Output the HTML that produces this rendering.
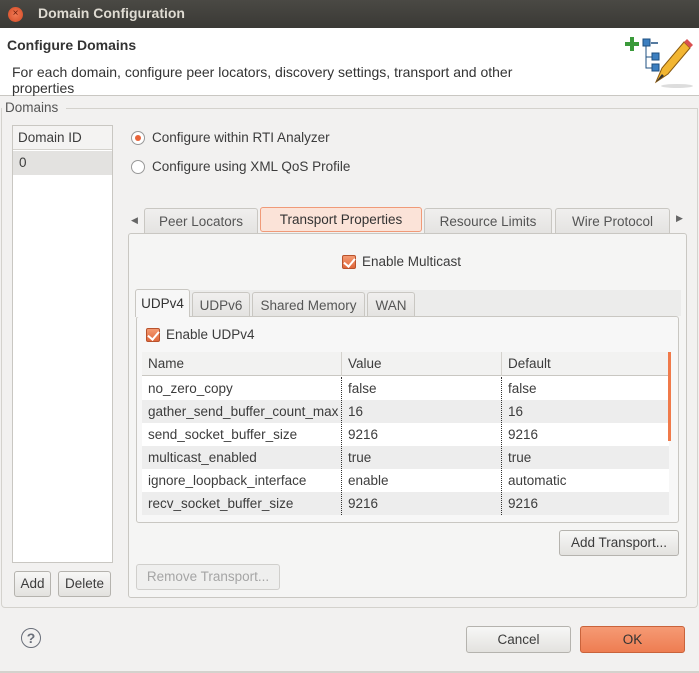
<!DOCTYPE html>
<html><head><meta charset="utf-8"><style>
*{box-sizing:border-box;margin:0;padding:0}
body{width:699px;height:673px;overflow:hidden;background:#f2f1f0;font-family:"Liberation Sans",sans-serif;font-size:13.5px;color:#3c3c3c;position:relative}
.a{position:absolute}
.btn{position:absolute;border:1px solid #b5b3ae;border-radius:3px;background:linear-gradient(#f7f7f6,#e3e2df);text-align:center;line-height:24px;color:#3c3c3c}
.tab{position:absolute;border:1px solid #c9c7c2;border-bottom:none;border-radius:3px 3px 0 0;background:linear-gradient(#f0efee,#e4e3e1);text-align:center;color:#555}
.cb{position:absolute;width:14px;height:14px;border-radius:2px;background:linear-gradient(#f49a72,#e0683c);border:1px solid #b8522c}
.cb:after{content:"";position:absolute;left:3px;top:0px;width:5px;height:9px;border:solid #fff;border-width:0 2px 2px 0;transform:rotate(40deg)}
.row{position:absolute;left:142px;width:527px;height:23px;line-height:23px}
.row span{position:absolute;top:0}
</style></head><body>
<div class="a" style="left:0;top:0;width:699px;height:28px;background:linear-gradient(#4a4944,#3a3935)"></div>
<div class="a" style="left:8px;top:7px;width:15px;height:15px;border-radius:50%;background:radial-gradient(#f27a55,#d24a25);color:#6a1c0a;font-size:10px;text-align:center;line-height:14px">×</div>
<div class="a" style="left:38px;top:5px;color:#dfdbd2;font-weight:bold;font-size:14px">Domain Configuration</div>
<div class="a" style="left:0;top:28px;width:699px;height:68px;background:#fff;border-bottom:1px solid #c9c7c2"></div>
<div class="a" style="left:7px;top:37px;font-weight:bold;font-size:14px;color:#333">Configure Domains</div>
<div class="a" style="left:12px;top:64px;font-size:14px;color:#333;line-height:16px;width:560px">For each domain, configure peer locators, discovery settings, transport and other properties</div>
<svg class="a" style="left:622px;top:30px" width="76" height="64">
<rect x="8" y="7" width="4" height="14" fill="#3a9a3a"/><rect x="3" y="12" width="14" height="4" fill="#3a9a3a"/>
<rect x="21" y="9" width="7" height="7" fill="#3d7fc0" stroke="#1d4f80"/><line x1="29" y1="13" x2="36" y2="13" stroke="#1d4f80" stroke-width="1.5"/>
<path d="M24 16V38H30M24 27H30" stroke="#1d4f80" fill="none"/>
<rect x="30" y="23" width="7" height="7" fill="#3d7fc0" stroke="#1d4f80"/><rect x="30" y="34" width="7" height="7" fill="#3d7fc0" stroke="#1d4f80"/>
<path d="M34 52L40 38L62 12L68 18L46 44Z" fill="#f2b632" stroke="#8a5a10"/><path d="M34 52L40 44L42 46Z" fill="#333"/>
<path d="M62 12L65 9L71 15L68 18Z" fill="#d95050"/>
<ellipse cx="55" cy="56" rx="16" ry="2" fill="#ddd"/></svg>
<div class="a" style="left:5px;top:100px;color:#555">Domains</div>
<div class="a" style="left:1px;top:108px;width:697px;height:500px;border:1px solid #d4d2cd;border-top:none;border-radius:0 0 4px 4px"></div>
<div class="a" style="left:66px;top:108px;width:632px;border-top:1px solid #d4d2cd"></div>
<div class="a" style="left:12px;top:125px;width:101px;height:438px;background:#fff;border:1px solid #c9c7c2"></div>
<div class="a" style="left:13px;top:126px;width:99px;height:24px;background:#f4f3f2;border-bottom:1px solid #d4d2cd;padding-left:5px;line-height:24px">Domain ID</div>
<div class="a" style="left:13px;top:151px;width:99px;height:24px;background:#e3e2e0;padding-left:6px;line-height:24px">0</div>
<div class="btn" style="left:14px;top:571px;width:37px;height:26px">Add</div>
<div class="btn" style="left:58px;top:571px;width:53px;height:26px">Delete</div>
<div class="a" style="left:131px;top:131px;width:14px;height:14px;border-radius:50%;background:#fff;border:1px solid #999"><div class="a" style="left:3px;top:3px;width:6px;height:6px;border-radius:50%;background:#e8643a"></div></div>
<div class="a" style="left:152px;top:130px">Configure within RTI Analyzer</div>
<div class="a" style="left:131px;top:160px;width:14px;height:14px;border-radius:50%;background:#fff;border:1px solid #999"></div>
<div class="a" style="left:152px;top:159px">Configure using XML QoS Profile</div>
<div class="a" style="left:131px;top:215px;font-size:9px;color:#666">◀</div>
<div class="a" style="left:676px;top:213px;font-size:9px;color:#666">▶</div>
<div class="a" style="left:128px;top:233px;width:559px;height:365px;border:1px solid #c9c7c2;border-radius:3px;background:#f5f5f4"></div>
<div class="tab" style="left:144px;top:208px;width:114px;height:25px;line-height:26px">Peer Locators</div>
<div class="tab" style="left:260px;top:207px;width:162px;height:25px;line-height:24px;background:#fbe3d8;border:1px solid #f09a78;border-radius:3px;color:#333">Transport Properties</div>
<div class="tab" style="left:424px;top:208px;width:128px;height:25px;line-height:26px">Resource Limits</div>
<div class="tab" style="left:555px;top:208px;width:115px;height:25px;line-height:26px">Wire Protocol</div>
<div class="cb" style="left:342px;top:255px"></div>
<div class="a" style="left:362px;top:254px">Enable Multicast</div>
<div class="a" style="left:136px;top:290px;width:545px;height:26px;background:#ececeb"></div>
<div class="a" style="left:136px;top:316px;width:543px;height:207px;border:1px solid #c9c7c2;border-radius:3px;background:#f7f7f7"></div>
<div class="tab" style="left:135px;top:289px;width:55px;height:28px;line-height:28px;background:#f7f7f7;color:#333">UDPv4</div>
<div class="tab" style="left:192px;top:292px;width:58px;height:24px;line-height:25px">UDPv6</div>
<div class="tab" style="left:252px;top:292px;width:113px;height:24px;line-height:25px">Shared Memory</div>
<div class="tab" style="left:367px;top:292px;width:48px;height:24px;line-height:25px">WAN</div>
<div class="cb" style="left:146px;top:328px"></div>
<div class="a" style="left:166px;top:327px">Enable UDPv4</div>
<div class="a" style="left:142px;top:352px;width:527px;height:163px;background:#fff"></div>
<div class="a" style="left:142px;top:352px;width:527px;height:24px;background:#f2f2f1;border-bottom:1px solid #c9c7c2;line-height:24px"><span class="a" style="left:6px">Name</span><span class="a" style="left:206px">Value</span><span class="a" style="left:366px">Default</span></div>
<div class="a" style="left:341px;top:352px;height:24px;border-left:1px solid #d4d2cd"></div>
<div class="a" style="left:501px;top:352px;height:24px;border-left:1px solid #d4d2cd"></div>
<div class="row" style="top:377px"><span style="left:6px">no_zero_copy</span><span style="left:206px">false</span><span style="left:366px">false</span></div>
<div class="row" style="top:400px;background:#ededed"><span style="left:6px;width:194px;overflow:hidden;white-space:nowrap">gather_send_buffer_count_max</span><span style="left:206px">16</span><span style="left:366px">16</span></div>
<div class="row" style="top:423px"><span style="left:6px">send_socket_buffer_size</span><span style="left:206px">9216</span><span style="left:366px">9216</span></div>
<div class="row" style="top:446px;background:#ededed"><span style="left:6px">multicast_enabled</span><span style="left:206px">true</span><span style="left:366px">true</span></div>
<div class="row" style="top:469px"><span style="left:6px">ignore_loopback_interface</span><span style="left:206px">enable</span><span style="left:366px">automatic</span></div>
<div class="row" style="top:492px;background:#ededed"><span style="left:6px">recv_socket_buffer_size</span><span style="left:206px">9216</span><span style="left:366px">9216</span></div>
<div class="a" style="left:341px;top:377px;height:138px;border-left:1px dotted #333"></div>
<div class="a" style="left:501px;top:377px;height:138px;border-left:1px dotted #333"></div>
<div class="a" style="left:668px;top:352px;width:3px;height:89px;background:#f07a4a"></div>
<div class="btn" style="left:559px;top:530px;width:120px;height:26px">Add Transport...</div>
<div class="btn" style="left:136px;top:564px;width:144px;height:26px;color:#a5a5a5;background:#efefee;border-color:#d0cfcc">Remove Transport...</div>
<div class="a" style="left:21px;top:628px;width:20px;height:20px;border-radius:50%;border:1.5px solid #6a6f7a;text-align:center;line-height:18px;font-weight:bold;color:#6a6f7a;font-size:14px">?</div>
<div class="btn" style="left:466px;top:626px;width:105px;height:27px;line-height:26px">Cancel</div>
<div class="btn" style="left:580px;top:626px;width:105px;height:27px;line-height:26px;background:linear-gradient(#f59a74,#ee7d52);border-color:#c9633b;color:#333">OK</div>
<div class="a" style="left:0;top:671px;width:699px;height:2px;background:#d4d2cd"></div>
</body></html>
